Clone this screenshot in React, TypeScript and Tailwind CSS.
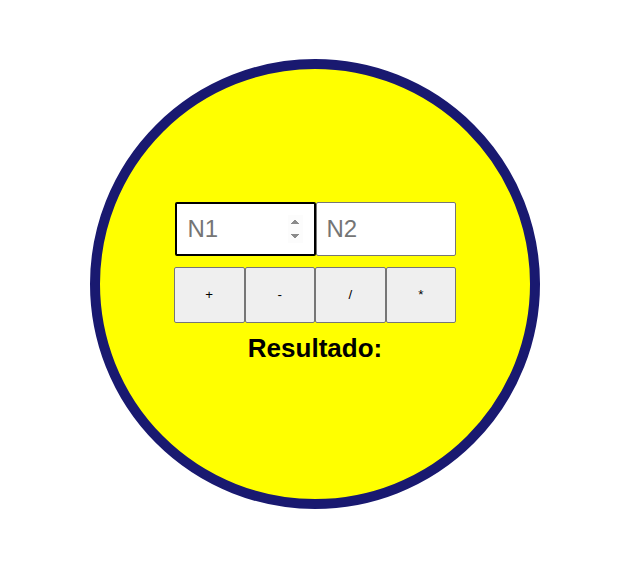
export default function App() {
  return (
    <div className="min-h-[577px] bg-white pt-[59px] pl-[90px] font-['Liberation_Sans',Arial,sans-serif]">
      <div className="flex h-[450px] w-[450px] flex-col items-center justify-center rounded-full border-[10px] border-[#191970] bg-[#ffff00]">
        <div className="flex">
          <input
            type="number"
            placeholder="N1"
            autoFocus
            className="h-[54px] w-[141px] rounded-[2px] border-2 border-black bg-white px-[11px] text-[24px] text-black outline-none placeholder:text-[#757575]"
          />
          <input
            type="text"
            placeholder="N2"
            className="h-[54px] w-[140px] rounded-[2px] border border-[#767676] bg-white px-[10px] text-[24px] text-black outline-none placeholder:text-[#757575]"
          />
        </div>
        <div className="mt-[11px] flex">
          {["+", "-", "/", "*"].map((op) => (
            <button
              key={op}
              className="h-[56px] w-[70.5px] rounded-[2px] border border-[#767676] bg-[#efefef] text-[13.33px] text-black"
            >
              {op}
            </button>
          ))}
        </div>
        <h2 className="mt-[10px] text-[26px] font-bold leading-[30px] text-black">
          Resultado:
        </h2>
        <div className="h-[4px]" />
      </div>
    </div>
  );
}
